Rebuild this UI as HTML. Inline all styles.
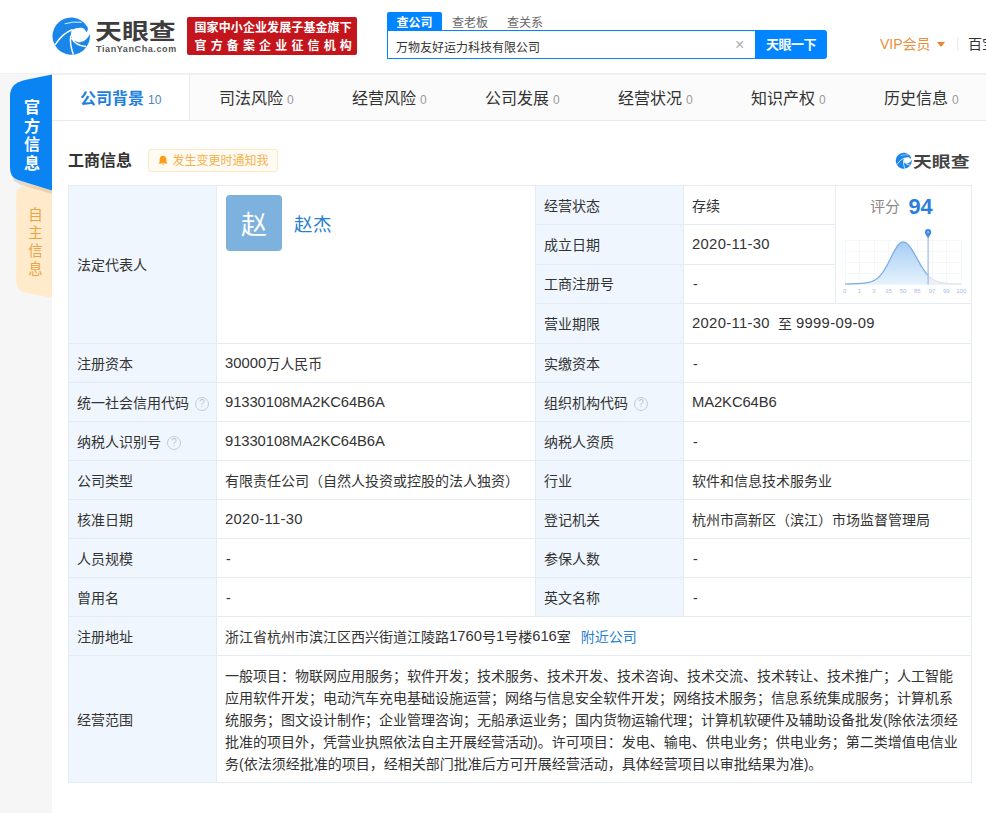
<!DOCTYPE html>
<html lang="zh-CN">
<head>
<meta charset="utf-8">
<title>万物友好运力科技有限公司 - 天眼查</title>
<style>
*{box-sizing:border-box;margin:0;padding:0}
html,body{width:986px;height:813px;overflow:hidden;background:#fff}
body{font-family:"Liberation Sans","Noto Sans CJK SC",sans-serif;color:#333;font-size:14px;position:relative}
.abs{position:absolute;white-space:nowrap}
#hdr{position:absolute;left:0;top:0;width:986px;height:75px;background:#fff;border-bottom:2px solid #f0f0f0}
#side{position:absolute;left:0;top:74px;width:52px;height:739px;background:#f6f6f6}
#nav{position:absolute;left:52px;top:75px;width:934px;height:46px;background:#fbfbfb;border-bottom:1px solid #ebebeb}
.tab{position:absolute;top:74.5px;height:48px;line-height:48px;font-size:16px;color:#333;white-space:nowrap}
.tab small{font-size:12px;color:#999;margin-left:4px;font-weight:normal}
.cell{position:absolute;background:#fff;font-size:14px;color:#333;white-space:nowrap}
.lab{background:#eff6fe}
.hl{position:absolute;height:1px;background:#e4ebf4}
.vl{position:absolute;width:1px;background:#e4ebf4}
.t{position:absolute;white-space:nowrap;font-size:14px;line-height:20px;color:#333}
.q{display:inline-block;width:14px;height:14px;border:1.3px solid #bfcddb;border-radius:50%;color:#b5c8da;font-size:10px;line-height:12px;text-align:center;vertical-align:1px;margin-left:6px}
a{color:#2b7fd0;text-decoration:none}
.n{font-size:14.8px;position:relative;top:-1px}
</style>
</head>
<body>
<div id="hdr"></div>
<svg class="abs" style="left:46px;top:11px" width="50" height="50" viewBox="0 0 813 813"><path d="M712 375 A304 304 0 1 1 675 260 Q692 312 655 345 Q648 300 590 274 Q500 262 420 310 Q385 400 430 465 Q470 495 540 512 Q660 500 712 375 Z" fill="#1a86ea"/>
<g fill="none" stroke="#fff" stroke-linecap="round">
<path d="M150 548 Q265 365 425 305" stroke-width="22"/>
<path d="M442 700 Q385 540 400 410" stroke-width="24"/>
<path d="M420 450 Q480 560 645 578" stroke-width="22"/>
<path d="M310 207 Q440 165 575 182" stroke-width="14"/>
</g></svg>
<div class="abs" id="lg1" style="left:95px;top:16.5px;font-size:21.5px;line-height:30px;font-weight:700;color:#3d3d3d;transform-origin:0 50%;transform:scaleX(1.25)">天眼查</div>
<div class="abs" id="lg2" style="left:96px;top:43px;font-size:9px;line-height:12px;font-weight:700;color:#555;letter-spacing:0.6px">TianYanCha.com</div>
<div class="abs" style="left:187px;top:17px;width:170px;height:38px;background:#c4151c;border-radius:2px"></div>
<div class="abs" style="left:194.5px;top:19px;font-size:12px;line-height:18px;font-weight:700;color:#fff;letter-spacing:0.1px">国家中小企业发展子基金旗下</div>
<div class="abs" style="left:194.5px;top:36.5px;font-size:12px;line-height:18px;font-weight:700;color:#fff;letter-spacing:4.15px">官方备案企业征信机构</div>
<div class="abs" style="left:387px;top:12px;width:55px;height:18px;border-radius:2px 2px 0 0;background:#0084ff;color:#fff;font-size:12px;line-height:23px;overflow:hidden;text-align:center;font-weight:700">查公司</div>
<div class="abs" style="left:452px;top:15px;font-size:12px;line-height:17px;color:#666">查老板</div>
<div class="abs" style="left:507px;top:15px;font-size:12px;line-height:17px;color:#666">查关系</div>
<div class="abs" style="left:387px;top:30px;width:369px;height:29px;border:1px solid #0084ff;background:#fff"></div>
<div class="abs" style="left:396px;top:39.5px;font-size:12px;line-height:17px;color:#333">万物友好运力科技有限公司</div>
<div class="abs" style="left:735px;top:35.5px;font-size:16px;line-height:18px;color:#b0b0b0;font-weight:300">×</div>
<div class="abs" style="left:755px;top:30px;width:72px;height:29px;border-radius:0 3px 3px 0;background:#0084ff;color:#fff;font-size:13px;letter-spacing:-0.5px;line-height:30.5px;text-align:center;font-weight:700">天眼一下</div>
<div class="abs" style="left:880px;top:34px;font-size:14px;line-height:20px;color:#e8903a">VIP会员</div>
<div class="abs" style="left:937px;top:41.5px;width:0;height:0;border-left:4px solid transparent;border-right:4px solid transparent;border-top:5.5px solid #f07f2e"></div>
<div class="abs" style="left:957px;top:37px;width:1px;height:14px;background:#ececec"></div>
<div class="abs" style="left:968px;top:34px;font-size:14px;line-height:20px;color:#333">百宝箱</div>
<div id="side"></div>
<div id="nav"></div>
<svg class="abs" style="left:0;top:73px" width="52" height="240" viewBox="0 0 52 240">
<path d="M52 113 L25 113 Q16.2 113 16.2 123 L16.200 207 Q16.200 217 24 219.500 L52 224.800 Z" fill="#ffebcb"/>
<path d="M52 117.400 L18 107 L13 104 L14 108 L20 111.500 L52 121 Z" fill="#b89868" opacity="0.28"/>
<path d="M52 1.400 L25 7 Q10 10.200 10 23 L10 95 Q10 104.500 18 107 L52 117.400 Z" fill="#0a84f2"/>
</svg>
<div class="abs" style="left:24px;width:16px;text-align:center;top:99.2px;font-size:16px;line-height:18px;font-weight:700;color:#fff">官</div>
<div class="abs" style="left:24px;width:16px;text-align:center;top:117.8px;font-size:16px;line-height:18px;font-weight:700;color:#fff">方</div>
<div class="abs" style="left:24px;width:16px;text-align:center;top:136.4px;font-size:16px;line-height:18px;font-weight:700;color:#fff">信</div>
<div class="abs" style="left:24px;width:16px;text-align:center;top:155.0px;font-size:16px;line-height:18px;font-weight:700;color:#fff">息</div>
<div class="abs" style="left:28px;width:15px;text-align:center;top:206.0px;font-size:14.5px;line-height:18px;color:#e9a545">自</div>
<div class="abs" style="left:28px;width:15px;text-align:center;top:224.0px;font-size:14.5px;line-height:18px;color:#e9a545">主</div>
<div class="abs" style="left:28px;width:15px;text-align:center;top:242.0px;font-size:14.5px;line-height:18px;color:#e9a545">信</div>
<div class="abs" style="left:28px;width:15px;text-align:center;top:260.0px;font-size:14.5px;line-height:18px;color:#e9a545">息</div>
<div class="abs" style="left:52px;top:75px;width:137px;height:45px;background:#fff"></div>
<div class="tab" style="left:80px;color:#1f7fdc;font-weight:700">公司背景<small style="color:#4d82c0">10</small></div>
<div class="abs" style="left:189px;top:75px;width:1px;height:45px;background:#ececec"></div>
<div class="tab" style="left:219px">司法风险<small>0</small></div>
<div class="tab" style="left:352px">经营风险<small>0</small></div>
<div class="tab" style="left:485px">公司发展<small>0</small></div>
<div class="tab" style="left:618px">经营状况<small>0</small></div>
<div class="tab" style="left:751px">知识产权<small>0</small></div>
<div class="tab" style="left:884px">历史信息<small>0</small></div>
<div class="abs" style="left:68px;top:149px;font-size:16px;line-height:24px;font-weight:700;color:#333">工商信息</div>
<div class="abs" style="left:148px;top:149px;width:130px;height:23px;background:#fffbf3;border:1px solid #fbe8c6;border-radius:3px"></div>
<svg class="abs" style="left:156.8px;top:154.5px" width="12" height="12" viewBox="0 0 12 12"><path d="M6 0.800 C3.800 0.800 2.600 2.500 2.600 4.500 L2.600 7 L1.500 8.600 L10.500 8.600 L9.400 7 L9.400 4.500 C9.400 2.500 8.200 0.800 6 0.800 Z M4.800 9.400 A1.300 1.300 0 0 0 7.200 9.400 Z" fill="#ff9c1a"/></svg>
<div class="abs" style="left:172.5px;top:151.5px;font-size:12px;line-height:18px;color:#f4b04c">发生变更时通知我</div>
<svg class="abs" style="left:893.3px;top:149.8px" width="21.4" height="21.4" viewBox="0 0 813 813"><path d="M712 375 A304 304 0 1 1 675 260 Q692 312 655 345 Q648 300 590 274 Q500 262 420 310 Q385 400 430 465 Q470 495 540 512 Q660 500 712 375 Z" fill="#1a86ea"/>
<g fill="none" stroke="#fff" stroke-linecap="round">
<path d="M150 548 Q265 365 425 305" stroke-width="30"/>
<path d="M442 700 Q385 540 400 410" stroke-width="30"/>
<path d="M420 450 Q480 560 645 578" stroke-width="30"/>
<path d="M310 207 Q440 165 575 182" stroke-width="20"/>
</g></svg>
<div class="abs" style="left:912.5px;top:149px;font-size:15.3px;line-height:26px;font-weight:700;color:#444;transform-origin:0 50%;transform:scaleX(1.23)">天眼查</div>
<div class="abs lab" style="left:68px;top:185px;width:148px;height:597px"></div>
<div class="abs lab" style="left:535px;top:185px;width:148px;height:431px"></div>
<div class="hl" style="left:68px;top:185px;width:904px"></div>
<div class="hl" style="left:535px;top:224px;width:301px"></div>
<div class="hl" style="left:535px;top:264px;width:301px"></div>
<div class="hl" style="left:535px;top:303px;width:437px"></div>
<div class="hl" style="left:68px;top:343px;width:904px"></div>
<div class="hl" style="left:68px;top:382px;width:904px"></div>
<div class="hl" style="left:68px;top:421px;width:904px"></div>
<div class="hl" style="left:68px;top:460px;width:904px"></div>
<div class="hl" style="left:68px;top:499px;width:904px"></div>
<div class="hl" style="left:68px;top:538px;width:904px"></div>
<div class="hl" style="left:68px;top:577px;width:904px"></div>
<div class="hl" style="left:68px;top:616px;width:904px"></div>
<div class="hl" style="left:68px;top:655px;width:904px"></div>
<div class="hl" style="left:68px;top:782px;width:904px"></div>
<div class="vl" style="left:68px;top:185px;height:598px"></div>
<div class="vl" style="left:216px;top:185px;height:598px"></div>
<div class="vl" style="left:535px;top:185px;height:432px"></div>
<div class="vl" style="left:683px;top:185px;height:432px"></div>
<div class="vl" style="left:835px;top:185px;height:119px"></div>
<div class="vl" style="left:971px;top:185px;height:598px"></div>
<div class="t" style="left:77px;top:255px;">法定代表人</div>
<div class="abs" style="left:226px;top:195px;width:56px;height:56px;background:#7db2de;border-radius:4px;color:#fff;font-size:26px;line-height:60px;overflow:hidden;text-align:center">赵</div>
<div class="abs" style="left:294px;top:212px;font-size:18.5px;letter-spacing:0.6px;line-height:26px;color:#2a7fcf">赵杰</div>
<div class="t" style="left:544px;top:196px;">经营状态</div>
<div class="t" style="left:692px;top:196px;">存续</div>
<div class="t" style="left:544px;top:235px;">成立日期</div>
<div class="t" style="left:692px;top:235px;"><span class="n" style="letter-spacing:0.33px">2020-11-30</span></div>
<div class="t" style="left:544px;top:274px;">工商注册号</div>
<div class="t" style="left:693px;top:274px;">-</div>
<div class="t" style="left:544px;top:314px;">营业期限</div>
<div class="t" style="left:692px;top:314px;"><span class="n" style="letter-spacing:0.33px">2020-11-30</span><span style="margin:0 4px 0 8px">至</span><span class="n" style="letter-spacing:0.33px">9999-09-09</span></div>
<div class="t" style="left:77px;top:354px;">注册资本</div>
<div class="t" style="left:225px;top:354px;"><span class="n" style="letter-spacing:0.00px">30000</span>万人民币</div>
<div class="t" style="left:544px;top:354px;">实缴资本</div>
<div class="t" style="left:693px;top:354px;">-</div>
<div class="t" style="left:77px;top:393px;">统一社会信用代码<span class="q">?</span></div>
<div class="t" style="left:225px;top:393px;"><span class="n" style="letter-spacing:-0.08px">91330108MA2KC64B6A</span></div>
<div class="t" style="left:544px;top:393px;">组织机构代码<span class="q">?</span></div>
<div class="t" style="left:692px;top:393px;"><span class="n" style="letter-spacing:-0.10px">MA2KC64B6</span></div>
<div class="t" style="left:77px;top:432px;">纳税人识别号<span class="q">?</span></div>
<div class="t" style="left:225px;top:432px;"><span class="n" style="letter-spacing:-0.08px">91330108MA2KC64B6A</span></div>
<div class="t" style="left:544px;top:432px;">纳税人资质</div>
<div class="t" style="left:693px;top:432px;">-</div>
<div class="t" style="left:77px;top:471px;">公司类型</div>
<div class="t" style="left:225px;top:471px;">有限责任公司（自然人投资或控股的法人独资）</div>
<div class="t" style="left:544px;top:471px;">行业</div>
<div class="t" style="left:692px;top:471px;">软件和信息技术服务业</div>
<div class="t" style="left:77px;top:510px;">核准日期</div>
<div class="t" style="left:225px;top:510px;"><span class="n" style="letter-spacing:0.33px">2020-11-30</span></div>
<div class="t" style="left:544px;top:510px;">登记机关</div>
<div class="t" style="left:692px;top:510px;">杭州市高新区（滨江）市场监督管理局</div>
<div class="t" style="left:77px;top:549px;">人员规模</div>
<div class="t" style="left:226px;top:549px;">-</div>
<div class="t" style="left:544px;top:549px;">参保人数</div>
<div class="t" style="left:693px;top:549px;">-</div>
<div class="t" style="left:77px;top:588px;">曾用名</div>
<div class="t" style="left:226px;top:588px;">-</div>
<div class="t" style="left:544px;top:588px;">英文名称</div>
<div class="t" style="left:693px;top:588px;">-</div>
<div class="t" style="left:77px;top:627px;">注册地址</div>
<div class="t" style="left:225px;top:627px;">浙江省杭州市滨江区西兴街道江陵路<span class="n" style="letter-spacing:0.00px">1760</span>号<span class="n" style="letter-spacing:0.00px">1</span>号楼<span class="n" style="letter-spacing:0.00px">616</span>室<a style="margin-left:10px">附近公司</a></div>
<div class="t" style="left:77px;top:710px;">经营范围</div>
<div class="t" style="left:225px;top:666px;">一般项目：物联网应用服务；软件开发；技术服务、技术开发、技术咨询、技术交流、技术转让、技术推广；人工智能</div>
<div class="t" style="left:225px;top:688px;">应用软件开发；电动汽车充电基础设施运营；网络与信息安全软件开发；网络技术服务；信息系统集成服务；计算机系</div>
<div class="t" style="left:225px;top:710px;">统服务；图文设计制作；企业管理咨询；无船承运业务；国内货物运输代理；计算机软硬件及辅助设备批发(除依法须经</div>
<div class="t" style="left:225px;top:732px;">批准的项目外，凭营业执照依法自主开展经营活动)。许可项目：发电、输电、供电业务；供电业务；第二类增值电信业</div>
<div class="t" style="left:225px;top:754px;">务(依法须经批准的项目，经相关部门批准后方可开展经营活动，具体经营项目以审批结果为准)。</div>
<div class="abs" style="left:870px;top:197px;font-size:15px;line-height:20px;color:#888">评分</div>
<div class="abs" style="left:908.5px;top:193.5px;font-size:21.8px;line-height:26px;font-weight:700;color:#2b7fdc">94</div>
<svg class="abs" style="left:838px;top:225px" width="134" height="75" viewBox="0 0 134 75"><defs><linearGradient id="g1" x1="0" y1="0" x2="0" y2="1"><stop offset="0" stop-color="#a6cdf3"/><stop offset="1" stop-color="#e6f3fd"/></linearGradient></defs><path d="M7.5 15.5 V59.5 M21.5 15.5 V59.5 M36.5 15.5 V59.5 M50.5 15.5 V59.5 M65.5 15.5 V59.5 M79.5 15.5 V59.5 M94.5 15.5 V59.5 M108.5 15.5 V59.5 M123.5 15.5 V59.5 M7 15.5 H124 M7 26.5 H124 M7 37.5 H124 M7 48.5 H124 M7 59.5 H124" fill="none" stroke="#f3f6fb" stroke-width="1"/><polygon points="7.0,59.03 7.5,59.02 8.0,59.01 8.5,58.99 9.0,58.98 9.5,58.97 10.0,58.95 10.5,58.94 11.0,58.93 11.5,58.91 12.0,58.90 12.5,58.88 13.0,58.86 13.5,58.85 14.0,58.83 14.5,58.81 15.0,58.79 15.5,58.78 16.0,58.76 16.5,58.74 17.0,58.72 17.5,58.70 18.0,58.67 18.5,58.65 19.0,58.63 19.5,58.60 20.0,58.58 20.5,58.55 21.0,58.52 21.5,58.49 22.0,58.46 22.5,58.42 23.0,58.39 23.5,58.35 24.0,58.31 24.5,58.27 25.0,58.22 25.5,58.17 26.0,58.12 26.5,58.06 27.0,58.00 27.5,57.93 28.0,57.86 28.5,57.78 29.0,57.70 29.5,57.61 30.0,57.51 30.5,57.40 31.0,57.28 31.5,57.16 32.0,57.02 32.5,56.88 33.0,56.72 33.5,56.55 34.0,56.36 34.5,56.16 35.0,55.95 35.5,55.71 36.0,55.46 36.5,55.20 37.0,54.91 37.5,54.60 38.0,54.27 38.5,53.92 39.0,53.55 39.5,53.15 40.0,52.72 40.5,52.27 41.0,51.79 41.5,51.29 42.0,50.76 42.5,50.20 43.0,49.61 43.5,48.99 44.0,48.34 44.5,47.66 45.0,46.96 45.5,46.22 46.0,45.46 46.5,44.67 47.0,43.85 47.5,43.01 48.0,42.14 48.5,41.25 49.0,40.34 49.5,39.41 50.0,38.46 50.5,37.49 51.0,36.52 51.5,35.53 52.0,34.53 52.5,33.53 53.0,32.53 53.5,31.53 54.0,30.54 54.5,29.55 55.0,28.58 55.5,27.62 56.0,26.68 56.5,25.77 57.0,24.88 57.5,24.03 58.0,23.20 58.5,22.42 59.0,21.68 59.5,20.98 60.0,20.33 60.5,19.73 61.0,19.18 61.5,18.69 62.0,18.26 62.5,17.89 63.0,17.58 63.5,17.34 64.0,17.16 64.5,17.05 65.0,17.00 65.5,17.02 66.0,17.09 66.5,17.21 67.0,17.39 67.5,17.63 68.0,17.91 68.5,18.25 69.0,18.63 69.5,19.07 70.0,19.55 70.5,20.07 71.0,20.64 71.5,21.25 72.0,21.89 72.5,22.58 73.0,23.29 73.5,24.04 74.0,24.81 74.5,25.61 75.0,26.44 75.5,27.28 76.0,28.14 76.5,29.02 77.0,29.90 77.5,30.80 78.0,31.70 78.5,32.61 79.0,33.52 79.5,34.43 80.0,35.33 80.5,36.23 81.0,37.12 81.5,38.00 82.0,38.87 82.5,39.73 83.0,40.57 83.5,41.39 84.0,42.20 84.5,42.99 85.0,43.76 85.5,44.51 86.0,45.24 86.5,45.94 87.0,46.62 87.5,47.28 88.0,47.92 88.5,48.53 89.0,49.11 89.5,49.68 90.0,50.21 90.1,50.32 90.1,59.6 7,59.6" fill="url(#g1)"/><polygon points="90.1,50.32 90.6,50.83 91.1,51.32 91.6,51.78 92.1,52.22 92.6,52.64 93.1,53.04 93.6,53.42 94.1,53.78 94.6,54.11 95.1,54.43 95.6,54.73 96.1,55.02 96.6,55.28 97.1,55.53 97.6,55.76 98.1,55.98 98.6,56.19 99.1,56.38 99.6,56.56 100.1,56.73 100.6,56.88 101.1,57.03 101.6,57.16 102.1,57.29 102.6,57.41 103.1,57.52 103.6,57.62 104.1,57.71 104.6,57.80 105.1,57.88 105.6,57.96 106.1,58.03 106.6,58.10 107.1,58.16 107.6,58.22 108.1,58.27 108.6,58.32 109.1,58.37 109.6,58.41 110.1,58.45 110.6,58.49 111.1,58.53 111.6,58.56 112.1,58.59 112.6,58.62 113.1,58.65 113.6,58.68 114.1,58.71 114.6,58.73 115.1,58.76 115.6,58.78 116.1,58.80 116.6,58.82 117.1,58.84 117.6,58.86 118.1,58.88 118.6,58.89 119.1,58.91 119.6,58.93 120.1,58.94 120.6,58.96 121.1,58.97 121.6,58.99 122.1,59.00 122.6,59.01 123.1,59.03 123.3,59.03 123.3,59.6 90.1,59.6" fill="#eceff3"/><polyline points="7.0,59.03 7.5,59.02 8.0,59.01 8.5,58.99 9.0,58.98 9.5,58.97 10.0,58.95 10.5,58.94 11.0,58.93 11.5,58.91 12.0,58.90 12.5,58.88 13.0,58.86 13.5,58.85 14.0,58.83 14.5,58.81 15.0,58.79 15.5,58.78 16.0,58.76 16.5,58.74 17.0,58.72 17.5,58.70 18.0,58.67 18.5,58.65 19.0,58.63 19.5,58.60 20.0,58.58 20.5,58.55 21.0,58.52 21.5,58.49 22.0,58.46 22.5,58.42 23.0,58.39 23.5,58.35 24.0,58.31 24.5,58.27 25.0,58.22 25.5,58.17 26.0,58.12 26.5,58.06 27.0,58.00 27.5,57.93 28.0,57.86 28.5,57.78 29.0,57.70 29.5,57.61 30.0,57.51 30.5,57.40 31.0,57.28 31.5,57.16 32.0,57.02 32.5,56.88 33.0,56.72 33.5,56.55 34.0,56.36 34.5,56.16 35.0,55.95 35.5,55.71 36.0,55.46 36.5,55.20 37.0,54.91 37.5,54.60 38.0,54.27 38.5,53.92 39.0,53.55 39.5,53.15 40.0,52.72 40.5,52.27 41.0,51.79 41.5,51.29 42.0,50.76 42.5,50.20 43.0,49.61 43.5,48.99 44.0,48.34 44.5,47.66 45.0,46.96 45.5,46.22 46.0,45.46 46.5,44.67 47.0,43.85 47.5,43.01 48.0,42.14 48.5,41.25 49.0,40.34 49.5,39.41 50.0,38.46 50.5,37.49 51.0,36.52 51.5,35.53 52.0,34.53 52.5,33.53 53.0,32.53 53.5,31.53 54.0,30.54 54.5,29.55 55.0,28.58 55.5,27.62 56.0,26.68 56.5,25.77 57.0,24.88 57.5,24.03 58.0,23.20 58.5,22.42 59.0,21.68 59.5,20.98 60.0,20.33 60.5,19.73 61.0,19.18 61.5,18.69 62.0,18.26 62.5,17.89 63.0,17.58 63.5,17.34 64.0,17.16 64.5,17.05 65.0,17.00 65.5,17.02 66.0,17.09 66.5,17.21 67.0,17.39 67.5,17.63 68.0,17.91 68.5,18.25 69.0,18.63 69.5,19.07 70.0,19.55 70.5,20.07 71.0,20.64 71.5,21.25 72.0,21.89 72.5,22.58 73.0,23.29 73.5,24.04 74.0,24.81 74.5,25.61 75.0,26.44 75.5,27.28 76.0,28.14 76.5,29.02 77.0,29.90 77.5,30.80 78.0,31.70 78.5,32.61 79.0,33.52 79.5,34.43 80.0,35.33 80.5,36.23 81.0,37.12 81.5,38.00 82.0,38.87 82.5,39.73 83.0,40.57 83.5,41.39 84.0,42.20 84.5,42.99 85.0,43.76 85.5,44.51 86.0,45.24 86.5,45.94 87.0,46.62 87.5,47.28 88.0,47.92 88.5,48.53 89.0,49.11 89.5,49.68 90.0,50.21 90.1,50.32" fill="none" stroke="#75aadf" stroke-width="1.2"/><polyline points="90.1,50.32 90.6,50.83 91.1,51.32 91.6,51.78 92.1,52.22 92.6,52.64 93.1,53.04 93.6,53.42 94.1,53.78 94.6,54.11 95.1,54.43 95.6,54.73 96.1,55.02 96.6,55.28 97.1,55.53 97.6,55.76 98.1,55.98 98.6,56.19 99.1,56.38 99.6,56.56 100.1,56.73 100.6,56.88 101.1,57.03 101.6,57.16 102.1,57.29 102.6,57.41 103.1,57.52 103.6,57.62 104.1,57.71 104.6,57.80 105.1,57.88 105.6,57.96 106.1,58.03 106.6,58.10 107.1,58.16 107.6,58.22 108.1,58.27 108.6,58.32 109.1,58.37 109.6,58.41 110.1,58.45 110.6,58.49 111.1,58.53 111.6,58.56 112.1,58.59 112.6,58.62 113.1,58.65 113.6,58.68 114.1,58.71 114.6,58.73 115.1,58.76 115.6,58.78 116.1,58.80 116.6,58.82 117.1,58.84 117.6,58.86 118.1,58.88 118.6,58.89 119.1,58.91 119.6,58.93 120.1,58.94 120.6,58.96 121.1,58.97 121.6,58.99 122.1,59.00 122.6,59.01 123.1,59.03 123.3,59.03" fill="none" stroke="#dfe4ea" stroke-width="1.2"/><path d="M90.1 8 V59.6" stroke="#9dbbe4" stroke-width="1.2" fill="none"/><path d="M90.1 13 C87.6 9.6 87 8.4 87 7.2 A3.1 3.1 0 0 1 93.2 7.2 C93.2 8.4 92.6 9.6 90.1 13 Z" fill="#3d8be0"/><circle cx="90.1" cy="7.2" r="1.1" fill="#8fbdf0"/><g font-family="Liberation Sans, sans-serif" font-size="6" fill="#a6bde0" text-anchor="middle"><text x="6.6" y="68">0</text><text x="21.3" y="68">1</text><text x="36.0" y="68">3</text><text x="50.5" y="68">15</text><text x="65.1" y="68">50</text><text x="79.3" y="68">85</text><text x="94.0" y="68">97</text><text x="108.3" y="68">99</text><text x="123.3" y="68">100</text></g></svg>
</body>
</html>
